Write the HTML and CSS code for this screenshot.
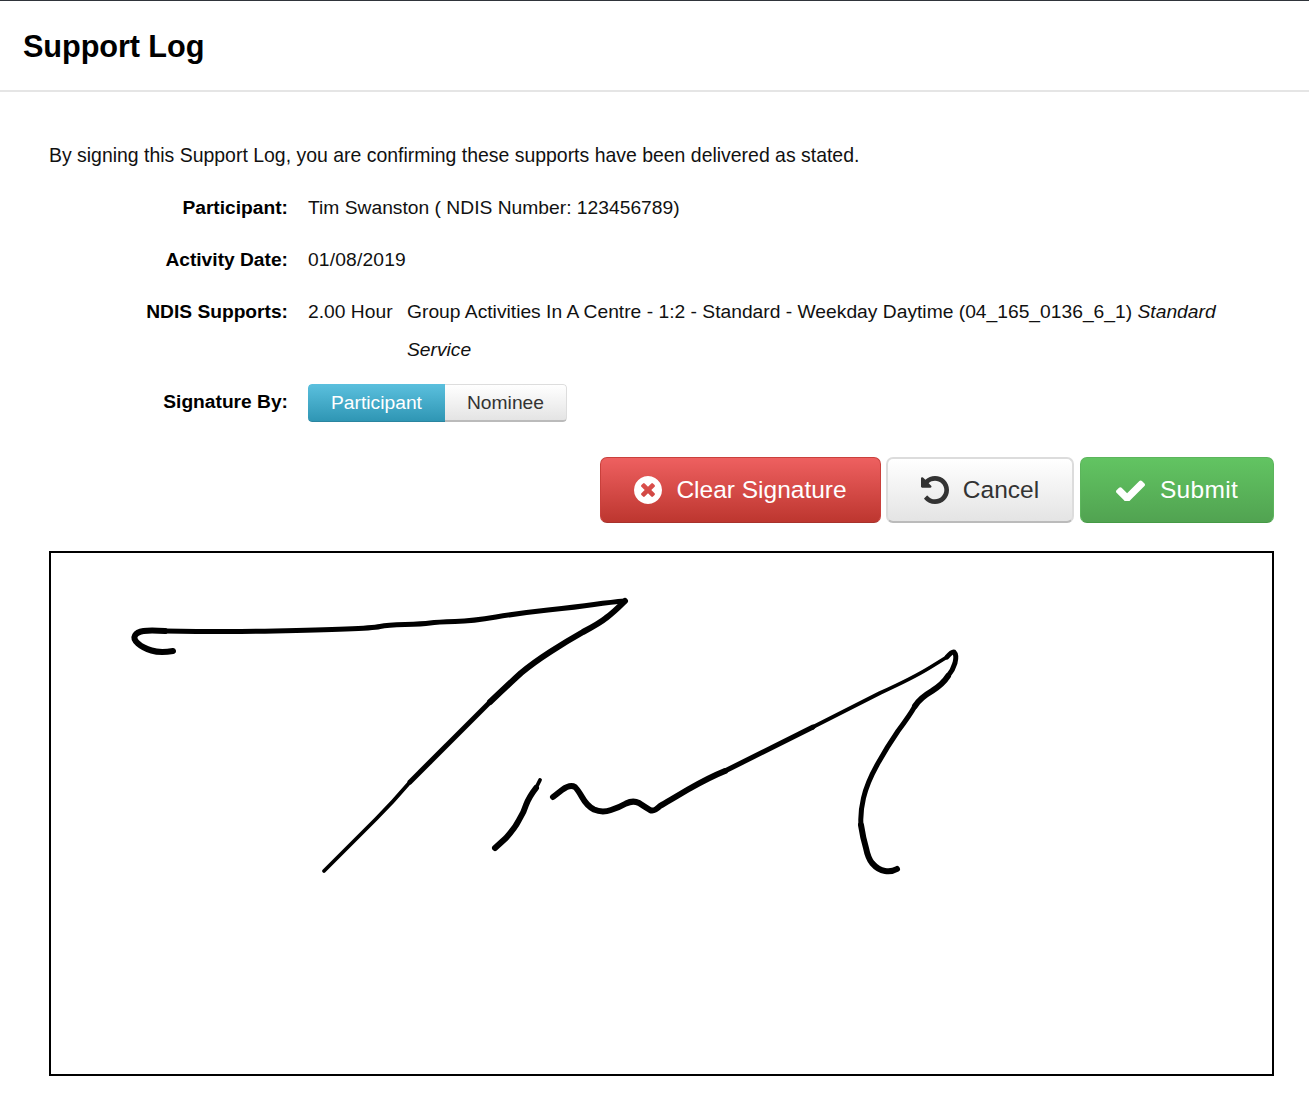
FILE: index.html
```html
<!DOCTYPE html>
<html lang="en">
<head>
<meta charset="utf-8">
<title>Support Log</title>
<link rel="stylesheet" href="styles.css">
</head>
<body>
<header class="modal-header"><h1>Support Log</h1></header>
<main class="modal-body">
  <p class="intro">By signing this Support Log, you are confirming these supports have been delivered as stated.</p>
  <div class="row"><div class="label">Participant:</div><div class="value">Tim Swanston ( NDIS Number: 123456789)</div></div>
  <div class="row"><div class="label">Activity Date:</div><div class="value date">01/08/2019</div></div>
  <div class="row"><div class="label">NDIS Supports:</div><div class="value supports"><span class="qty">2.00 Hour</span><span class="desc">Group Activities In A Centre - 1:2 - Standard - Weekday Daytime (04_165_0136_6_1) <em>Standard</em> <em>Service</em></span></div></div>
  <div class="row sig-row"><div class="label">Signature By:</div>
    <div class="toggle"><span class="seg active">Participant</span><span class="seg">Nominee</span></div>
  </div>
  <div class="actions">
    <button class="btn red" type="button"><svg class="icon" viewBox="128 128 1536 1536"><path fill="currentColor" d="M1277 1122q0-26-19-45l-181-181 181-181q19-19 19-45 0-27-19-46l-90-90q-19-19-46-19-26 0-45 19l-181 181-181-181q-19-19-45-19-27 0-46 19l-90 90q-19 19-19 46 0 26 19 45l181 181-181 181q-19 19-19 45 0 27 19 46l90 90q19 19 46 19 26 0 45-19l181-181 181 181q19 19 45 19 27 0 46-19l90-90q19-19 19-46zm387-226q0 209-103 385.500t-279.500 279.500-385.500 103-385.500-103-279.500-279.500-103-385.500 103-385.500 279.500-279.500 385.500-103 385.500 103 279.500 279.500 103 385.500z"/></svg>Clear Signature</button>
    <button class="btn grey" type="button"><svg class="icon" viewBox="128 128 1536 1536"><path fill="currentColor" d="M1664 896q0 156-61 298t-164 245-245 164-298 61q-172 0-327-72.500t-264-204.500q-7-10-6.500-22.500t8.500-20.500l137-138q10-9 25-9 16 2 23 12 73 95 179 147t225 52q104 0 198.500-40.500t163.500-109.500 109.500-163.500 40.500-198.500-40.500-198.500-109.500-163.500-163.500-109.500-198.500-40.500q-98 0-188 35.500t-160 101.500l137 138q31 30 14 69-17 40-59 40h-448q-26 0-45-19t-19-45v-448q0-42 40-59 39-17 69 14l130 129q107-101 244.500-156.500t284.500-55.500q156 0 298 61t245 164 164 245 61 298z"/></svg>Cancel</button>
    <button class="btn green" type="button"><svg class="icon check" viewBox="121 280 1550 1130"><path fill="currentColor" d="M1671 566q0 40-28 68l-724 724-136 136q-28 28-68 28t-68-28l-136-136-362-362q-28-28-28-68t28-68l136-136q28-28 68-28t68 28l294 295 656-657q28-28 68-28t68 28l136 136q28 28 28 68z"/></svg><span class="wide">Submit</span></button>
  </div>
  <div class="sig-box">
    <svg class="sig" viewBox="51 553 1221 521">
      <g class="ink">
        <path class="thick" d="M173 651Q160 653 151.500 650.500Q143 648 138 643.500Q133 639 135 635.500Q137 632 143.500 631Q150 630 165 631"/>
        <path class="mid" d="M165 631Q230 632 275 631Q320 630 346 629Q373 628 380 626.500Q387 625 405 624.500Q423 624 430 623Q437 622 455 621.500Q473 621 496 617Q520 613 548 610Q577 607 594 604.500Q612 602 625 601"/>
        <path class="thick" d="M625 601Q613 613 606 618Q600 623 583 632Q567 641 550 652Q533 663 521 673Q510 683 490 702"/>
        <path class="mid" d="M490 702L460 732L410 782"/>
        <path class="thin" d="M410 782Q393 802 376 819L324 871"/>
        <path class="thin" d="M540 780L536 788"/>
        <path class="thick" d="M536 788Q529 797 526 805Q524 812 519 820Q515 828 506 838L495 848"/>
        <path class="thick" d="M553 797L562 790Q570 784 575 787Q578 790 582 797Q587 806 594 809.500Q602 813 611 810Q620 807 626 803.500Q633 800 639 803Q645 807 650 810Q654 812 660 806Q667 802 688 789.500Q710 777 725 771"/>
        <path class="mid" d="M725 771L763 752L813 727"/>
        <path class="thin" d="M813 727L880 693Q913 678 930 667.500L947 657"/>
        <path class="mid" d="M947 657Q952 651 954 652Q957 655 955 663Q953 670 948 676"/>
        <path class="thick" d="M948 676Q943 684 932 691Q920 698 915 706"/>
        <path class="mid" d="M915 706Q910 715 898 731Q887 747 877 765Q867 783 863.500 798Q860 813 861 825"/>
        <path class="thick" d="M861 825Q863 838 866 848Q868 858 872 863Q878 870 885 871Q892 872 897 869"/>
      </g>
    </svg>
  </div>
</main>
</body>
</html>
```

FILE: styles.css
```css
* { box-sizing: border-box; }
html, body { margin: 0; padding: 0; background: #fff; }
body {
  font-family: "Liberation Sans", Arial, sans-serif;
  font-size: 19.25px;
  line-height: 38px;
  color: #111;
  height: 1095px;
  overflow: hidden;
  border-top: 1px solid #2f343a;
}
.modal-header {
  height: 91px;
  padding: 3px 23px 0;
  border-bottom: 2px solid #e5e5e5;
  display: flex;
  align-items: center;
}
.modal-header h1 {
  margin: 0;
  font-size: 30.7px;
  line-height: 40px;
  font-weight: 700;
  color: #000;
  letter-spacing: -0.1px;
}
.modal-body { padding: 44px 35px 0 49px; }
.intro { margin: 0 0 15px; font-size: 19.45px; }
.row { display: flex; margin-bottom: 14px; }
.label { width: 239px; text-align: right; font-size: 19.2px; font-weight: 700; color: #000; flex: none; }
.value { margin-left: 20px; }
.date { letter-spacing: 0.15px; }
.supports { display: flex; flex: 1; }
.qty { flex: none; width: 99px; }
.desc { flex: 1; }
.sig-row { margin-bottom: 0; height: 38px; }
.toggle {
  margin-left: 20px;
  margin-top: 1px;
  display: flex;
  height: 38px;
  border-radius: 4px;
  overflow: hidden;
  line-height: 36px;
}
.seg {
  width: 122px;
  text-align: center;
  color: #333;
  background: linear-gradient(#fff, #e4e4e4);
  border: 1px solid #ddd;
  border-left: 0;
  border-bottom: 2px solid #bbb;
  border-radius: 0 4px 4px 0;
}
.seg.active {
  width: 137px;
  color: #fff;
  background: linear-gradient(#5bc0de, #2f96b4);
  border: 0;
  border-bottom: 1px solid #2a85a0;
  border-radius: 4px 0 0 4px;
  line-height: 38px;
}
.actions {
  display: flex;
  justify-content: flex-end;
  gap: 6px;
  margin-top: 36px;
}
.btn {
  height: 66px;
  font: 24.5px/1 "Liberation Sans", Arial, sans-serif;
  border-radius: 7px;
  display: flex;
  align-items: center;
  justify-content: center;
  padding: 0;
  cursor: pointer;
}
.icon { width: 28px; height: 28px; margin-right: 14px; flex: none; }
.check { width: 29px; height: 22px; margin-right: 15px; }
.wide { letter-spacing: 0.3px; }
.red {
  width: 281px;
  margin-right: -1px;
  color: #fff;
  background: linear-gradient(#ee6060, #bd362f);
  border: 1px solid #c9403c;
  border-bottom-color: #a8322c;
}
.grey {
  width: 188px;
  color: #333;
  background: linear-gradient(#fff, #e4e4e4);
  border: 2px solid #dcdcdc;
  border-bottom-color: #bbb;
}
.green {
  width: 194px;
  color: #fff;
  background: linear-gradient(#62c462, #51a351);
  border: 1px solid #5cb55c;
  border-bottom-color: #459a45;
}
.sig-box {
  margin-top: 28px;
  height: 525px;
  border: 2px solid #000;
  background: #fff;
}
.sig { display: block; width: 100%; height: 100%; }
.ink { fill: none; stroke: #000; stroke-linecap: round; stroke-linejoin: round; }
.thick { stroke-width: 6; }
.mid { stroke-width: 5; }
.thin { stroke-width: 3.8; }
```
